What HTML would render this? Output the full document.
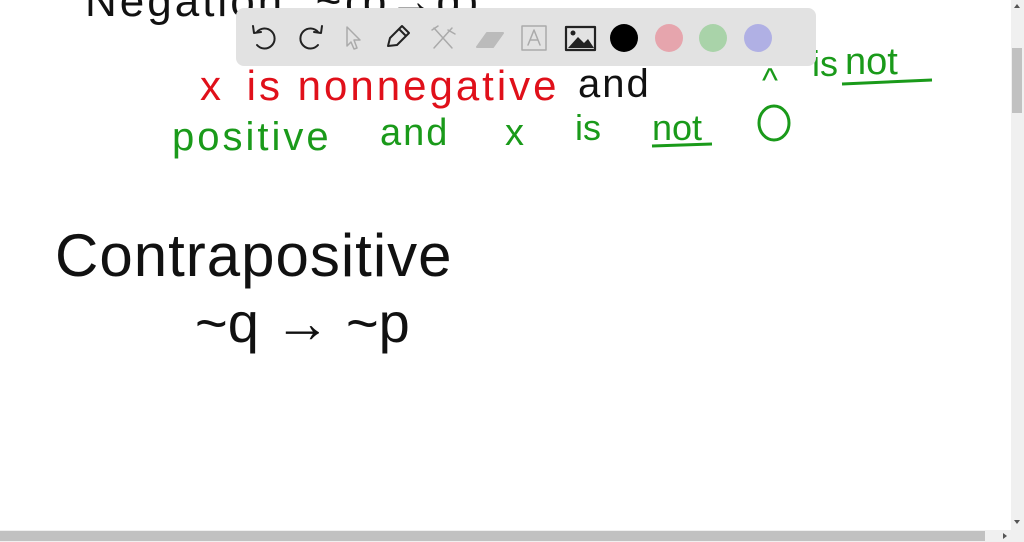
<!DOCTYPE html>
<html><head><style>
html,body{margin:0;padding:0;width:1024px;height:542px;overflow:hidden;background:#fff;font-family:"Liberation Sans",sans-serif}
svg{position:absolute;left:0;top:0}
</style></head><body>
<svg width="1024" height="542" viewBox="0 0 1024 542">
<g font-family="Liberation Sans, sans-serif" font-weight="normal">
<text x="85" y="16" font-size="44" fill="#111" letter-spacing="3">Negation: ~(p→q)</text>
<text x="200" y="100" font-size="42" fill="#e0101a" letter-spacing="3">x <tspan dx="8">is nonnegative</tspan></text>
<text x="578" y="97" font-size="40" fill="#111" letter-spacing="2">and</text>
<text x="762" y="92" font-size="34" fill="#1a9a1a">^</text>
<text x="812" y="76" font-size="36" fill="#1a9a1a">is</text>
<text x="845" y="74" font-size="38" fill="#1a9a1a">not</text>
<line x1="842" y1="84" x2="932" y2="80" stroke="#1a9a1a" stroke-width="3"/>
<text x="172" y="150" font-size="40" fill="#1a9a1a" letter-spacing="3">positive</text>
<text x="380" y="145" font-size="38" fill="#1a9a1a" letter-spacing="2">and</text>
<text x="505" y="145" font-size="38" fill="#1a9a1a">x</text>
<text x="575" y="140" font-size="36" fill="#1a9a1a">is</text>
<text x="652" y="140" font-size="36" fill="#1a9a1a">not</text>
<line x1="652" y1="146" x2="712" y2="144" stroke="#1a9a1a" stroke-width="3"/>
<ellipse cx="774" cy="123" rx="15" ry="17" fill="none" stroke="#1a9a1a" stroke-width="3"/>
<text x="55" y="276" font-size="60" fill="#111" letter-spacing="1">Contrapositive</text>
<text x="195" y="342" font-size="56" fill="#111">~q → ~p</text>
</g>
<rect x="236" y="8" width="580" height="58" rx="8" fill="#e2e2e2"/>
<g fill="none" stroke="#222" stroke-width="2" stroke-linecap="round" stroke-linejoin="round">
<path d="M257 32 A10 10 0 1 1 257 45"/><path d="M253 26 L254 33 L261 32"/>
<path d="M318 32 A10 10 0 1 0 318 45"/><path d="M322 26 L321 33 L314 32"/>
<path d="M347 27 L360 40 L354 40 L357 48 L354 49 L351 42 L347 46 Z" stroke="#aaa" stroke-width="1.5"/>
<path d="M388 46 L390 38 L402 26 L409 33 L397 45 Z M399 29 L406 36"/>
<path d="M434 28 L452 48 M452 28 L434 48 M432 30 L438 26 M448 30 L455 34" stroke="#aaa" stroke-width="1.5"/>
<path d="M477 47 L487 33 L503 33 L493 47 Z" fill="#bbb" stroke="#bbb"/>
<rect x="522" y="26" width="24" height="24" stroke="#aaa" stroke-width="1.5"/>
<path d="M528 45 L534 30 L540 45 M530 40 L538 40" stroke="#aaa" stroke-width="1.5"/>
<rect x="566" y="27" width="29" height="23" stroke-width="2.2"/>
</g>
<circle cx="573" cy="33" r="2.5" fill="#222"/>
<path d="M568 48 L578 37 L584 43 L588 39 L594 48 Z" fill="#222"/>
<circle cx="624" cy="38" r="14" fill="#000"/>
<circle cx="669" cy="38" r="14" fill="#e6a5ad"/>
<circle cx="713" cy="38" r="14" fill="#a9d3a9"/>
<circle cx="758" cy="38" r="14" fill="#b0b0e4"/>
<rect x="1011" y="0" width="13" height="530" fill="#f0f0f0"/>
<rect x="1012" y="48" width="10" height="65" fill="#c1c1c1"/>
<path d="M1014 8 L1017 4 L1020 8Z M1014 520 L1017 524 L1020 520Z" fill="#555"/>
<rect x="0" y="530" width="1024" height="12" fill="#f0f0f0"/>
<rect x="0" y="531" width="985" height="10" fill="#c1c1c1"/>
<path d="M1003 533 L1007 536 L1003 539Z" fill="#555"/>
</svg>
</body></html>
